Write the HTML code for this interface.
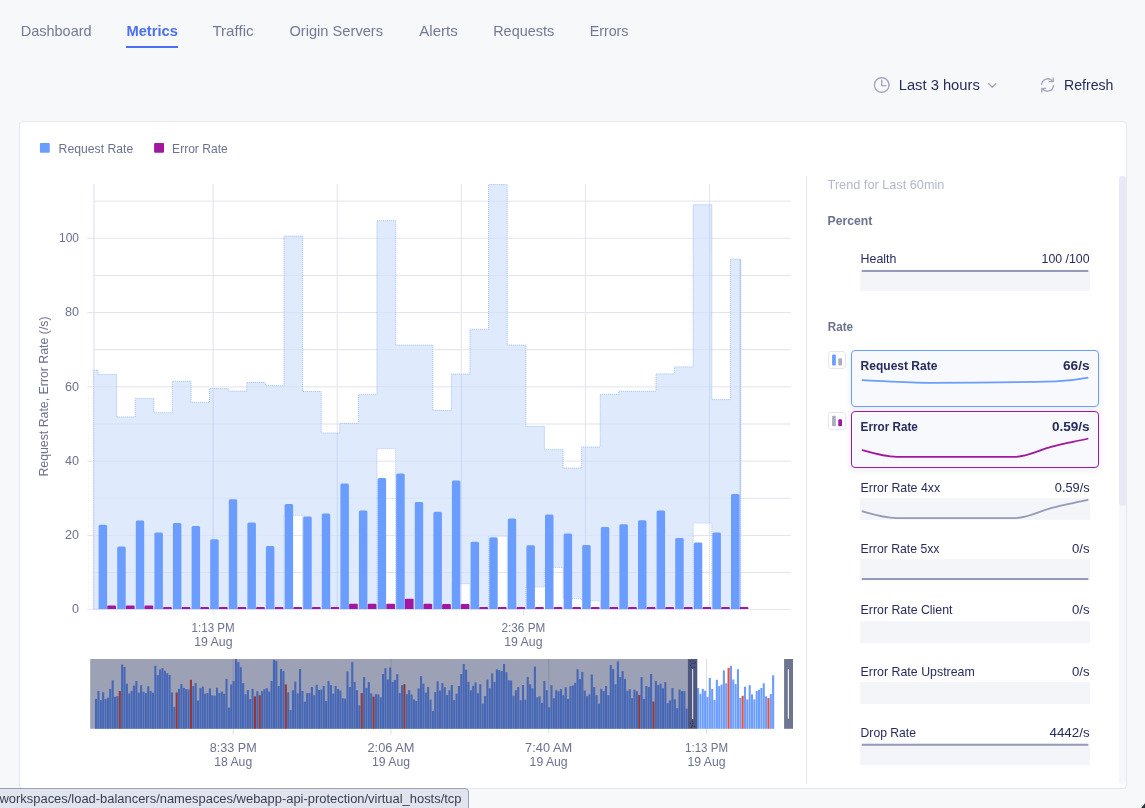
<!DOCTYPE html>
<html lang="en"><head><meta charset="utf-8"><title>Metrics</title>
<style>
html,body{margin:0;padding:0}
body{width:1145px;height:808px;overflow:hidden;background:#f7f8fa;font-family:"Liberation Sans", sans-serif;position:relative}
.card{position:absolute;left:19px;top:121px;width:1106px;height:666px;background:#fff;border:1px solid #e4e6f0;border-radius:4px}
.abs{position:absolute}
.gbox{position:absolute;left:860px;width:230px;height:22px;background:#f4f5f8}
.sel{position:absolute;left:851px;width:246px;height:55px;border-radius:4px;background:#f8f9fc;box-shadow:0 2px 6px rgba(40,50,100,0.10)}
.ibtn{position:absolute;left:828px;width:16px;height:16px;border:1px solid #e6e7f3;border-radius:3px;background:#fff}
.status{position:absolute;left:-1px;top:788px;width:470px;height:21px;background:#e1e4ec;border:1px solid #98a0b6;border-top-right-radius:4px;box-sizing:border-box}
svg text{font-family:"Liberation Sans", sans-serif}
svg{will-change:transform}
</style></head><body>

<div class="card"></div>
<div class="abs" style="left:126px;top:45.7px;width:52px;height:2px;background:#4a6ff3"></div>
<div class="sel" style="top:350px;border:1px solid #6b9dfe"></div>
<div class="sel" style="top:411px;border:1px solid #a3169f"></div>
<div class="ibtn" style="top:351px"></div><div class="ibtn" style="top:412px"></div>
<div class="abs" style="left:806px;top:176px;width:1px;height:608px;background:#e4e6f0"></div>
<div class="abs" style="left:1119px;top:176px;width:7px;height:608px;background:#f6f7fa;border-radius:3px"></div>
<div class="abs" style="left:1119px;top:176px;width:7px;height:330px;background:#e8e9f5;border-radius:3px"></div>
<svg class="abs" style="left:0;top:0" width="1145" height="808" viewBox="0 0 1145 808">
<text x="20.7" y="35.9" font-size="14.2" fill="#737a96" font-weight="normal" textLength="70.9" lengthAdjust="spacingAndGlyphs">Dashboard</text>
<text x="212.4" y="35.9" font-size="14.2" fill="#737a96" font-weight="normal" textLength="41.2" lengthAdjust="spacingAndGlyphs">Traffic</text>
<text x="289.4" y="35.9" font-size="14.2" fill="#737a96" font-weight="normal" textLength="93.7" lengthAdjust="spacingAndGlyphs">Origin Servers</text>
<text x="419.3" y="35.9" font-size="14.2" fill="#737a96" font-weight="normal" textLength="38.4" lengthAdjust="spacingAndGlyphs">Alerts</text>
<text x="493.2" y="35.9" font-size="14.2" fill="#737a96" font-weight="normal" textLength="61.0" lengthAdjust="spacingAndGlyphs">Requests</text>
<text x="589.7" y="35.9" font-size="14.2" fill="#737a96" font-weight="normal" textLength="38.7" lengthAdjust="spacingAndGlyphs">Errors</text>
<text x="126.4" y="35.9" font-size="14.2" fill="#4a6ff3" font-weight="bold" textLength="51.5" lengthAdjust="spacingAndGlyphs">Metrics</text>
<g fill="none" stroke="#a3a8c0" stroke-width="1.4" stroke-linecap="round" stroke-linejoin="round"><circle cx="881.7" cy="85" r="7.3"/><path d="M881.7 80.2V85.6H886"/><path d="M988.8 83.8L992.3 87.2L995.8 83.8"/><path d="M1041.6 84.2A6.2 6.2 0 0 1 1052.6 81.2"/><path d="M1053.2 77.9V81.6H1049.5"/><path d="M1053.4 85.8A6.2 6.2 0 0 1 1042.4 88.8"/><path d="M1041.8 92.1V88.4H1045.5"/></g>
<text x="898.7" y="89.8" font-size="14" fill="#262c5c" font-weight="normal" textLength="81.1" lengthAdjust="spacingAndGlyphs">Last 3 hours</text>
<text x="1064.0" y="89.8" font-size="14" fill="#262c5c" font-weight="normal" textLength="49.4" lengthAdjust="spacingAndGlyphs">Refresh</text>
<rect x="39.9" y="142.9" width="9.9" height="9.9" rx="1" fill="#6b9dfe"/>
<rect x="154.1" y="142.9" width="9.9" height="9.9" rx="1" fill="#a3169f"/>
<text x="58.6" y="152.8" font-size="12.2" fill="#6b7290" font-weight="normal" textLength="74.6" lengthAdjust="spacingAndGlyphs">Request Rate</text>
<text x="172.1" y="152.8" font-size="12.2" fill="#6b7290" font-weight="normal" textLength="55.6" lengthAdjust="spacingAndGlyphs">Error Rate</text>
<line x1="94.0" x2="791" y1="572.56" y2="572.56" stroke="#e1e3ee" stroke-width="1"/>
<line x1="87.3" x2="791" y1="535.42" y2="535.42" stroke="#e1e3ee" stroke-width="1"/>
<line x1="94.0" x2="791" y1="498.28" y2="498.28" stroke="#e1e3ee" stroke-width="1"/>
<line x1="87.3" x2="791" y1="461.14" y2="461.14" stroke="#e1e3ee" stroke-width="1"/>
<line x1="94.0" x2="791" y1="424.00" y2="424.00" stroke="#e1e3ee" stroke-width="1"/>
<line x1="87.3" x2="791" y1="386.86" y2="386.86" stroke="#e1e3ee" stroke-width="1"/>
<line x1="94.0" x2="791" y1="349.72" y2="349.72" stroke="#e1e3ee" stroke-width="1"/>
<line x1="87.3" x2="791" y1="312.58" y2="312.58" stroke="#e1e3ee" stroke-width="1"/>
<line x1="94.0" x2="791" y1="275.44" y2="275.44" stroke="#e1e3ee" stroke-width="1"/>
<line x1="87.3" x2="791" y1="238.30" y2="238.30" stroke="#e1e3ee" stroke-width="1"/>
<line x1="94.0" x2="791" y1="201.16" y2="201.16" stroke="#e1e3ee" stroke-width="1"/>
<line x1="87.3" x2="791" y1="609.5" y2="609.5" stroke="#e4e6f0" stroke-width="1"/>
<line x1="213.15" x2="213.15" y1="184" y2="609.5" stroke="#e1e3ee" stroke-width="1"/>
<line x1="337.24" x2="337.24" y1="184" y2="609.5" stroke="#e1e3ee" stroke-width="1"/>
<line x1="461.33" x2="461.33" y1="184" y2="609.5" stroke="#e1e3ee" stroke-width="1"/>
<line x1="585.42" x2="585.42" y1="184" y2="609.5" stroke="#e1e3ee" stroke-width="1"/>
<line x1="709.51" x2="709.51" y1="184" y2="609.5" stroke="#e1e3ee" stroke-width="1"/>
<line x1="94.0" x2="94.0" y1="184" y2="609.5" stroke="#d9dbed" stroke-width="1"/>
<line x1="213.15" x2="213.15" y1="609.5" y2="615.0" stroke="#e1e3ee" stroke-width="1"/>
<line x1="523.4" x2="523.4" y1="609.5" y2="615.0" stroke="#e1e3ee" stroke-width="1"/>
<text x="72.0" y="613.3" font-size="12.2" fill="#6b7290" font-weight="normal" textLength="7.0" lengthAdjust="spacingAndGlyphs">0</text>
<text x="65.0" y="539.0" font-size="12.2" fill="#6b7290" font-weight="normal" textLength="14.0" lengthAdjust="spacingAndGlyphs">20</text>
<text x="65.0" y="464.7" font-size="12.2" fill="#6b7290" font-weight="normal" textLength="14.0" lengthAdjust="spacingAndGlyphs">40</text>
<text x="65.0" y="390.5" font-size="12.2" fill="#6b7290" font-weight="normal" textLength="14.0" lengthAdjust="spacingAndGlyphs">60</text>
<text x="65.0" y="316.2" font-size="12.2" fill="#6b7290" font-weight="normal" textLength="14.0" lengthAdjust="spacingAndGlyphs">80</text>
<text x="59.0" y="241.9" font-size="12.2" fill="#6b7290" font-weight="normal" textLength="20.0" lengthAdjust="spacingAndGlyphs">100</text>
<text transform="translate(47.9,476.6) rotate(-90)" font-size="12.2" fill="#6b7290" textLength="160.2" lengthAdjust="spacingAndGlyphs">Request Rate, Error Rate (/s)</text>
<text x="191.6" y="632.0" font-size="12.2" fill="#6b7290" font-weight="normal" textLength="43.1" lengthAdjust="spacingAndGlyphs">1:13 PM</text>
<text x="194.2" y="645.6" font-size="12.2" fill="#6b7290" font-weight="normal" textLength="38.3" lengthAdjust="spacingAndGlyphs">19 Aug</text>
<text x="501.6" y="632.0" font-size="12.2" fill="#6b7290" font-weight="normal" textLength="43.6" lengthAdjust="spacingAndGlyphs">2:36 PM</text>
<text x="504.2" y="645.6" font-size="12.2" fill="#6b7290" font-weight="normal" textLength="38.3" lengthAdjust="spacingAndGlyphs">19 Aug</text>
<clipPath id="pc"><rect x="93.2" y="184" width="698.0" height="426.5"/></clipPath>
<clipPath id="ac"><path d="M94.0 370.2 L98.0 370.2 L98.0 374.6 L116.6 374.6 L116.6 417.0 L135.2 417.0 L135.2 398.4 L153.8 398.4 L153.8 412.7 L172.4 412.7 L172.4 381.3 L191.0 381.3 L191.0 402.3 L209.6 402.3 L209.6 388.6 L228.2 388.6 L228.2 391.1 L246.8 391.1 L246.8 382.5 L265.4 382.5 L265.4 385.7 L284.0 385.7 L284.0 236.1 L302.6 236.1 L302.6 391.5 L321.2 391.5 L321.2 433.0 L339.8 433.0 L339.8 423.4 L358.4 423.4 L358.4 394.4 L377.0 394.4 L377.0 220.7 L395.6 220.7 L395.6 345.1 L414.2 345.1 L414.2 345.1 L432.8 345.1 L432.8 410.5 L451.4 410.5 L451.4 374.1 L470.0 374.1 L470.0 329.3 L488.6 329.3 L488.6 184.6 L507.2 184.6 L507.2 345.1 L525.8 345.1 L525.8 426.5 L544.4 426.5 L544.4 449.7 L563.0 449.7 L563.0 468.1 L581.6 468.1 L581.6 447.1 L600.2 447.1 L600.2 394.3 L618.8 394.3 L618.8 391.3 L637.4 391.3 L637.4 391.3 L656.0 391.3 L656.0 373.9 L674.6 373.9 L674.6 366.9 L693.2 366.9 L693.2 204.8 L711.8 204.8 L711.8 399.6 L730.4 399.6 L730.4 259.2 L740.7 259.2 L740.7 609.0 L730.4 609.0 L730.4 609.0 L711.8 609.0 L711.8 523.1 L693.2 523.1 L693.2 609.0 L674.6 609.0 L674.6 609.0 L656.0 609.0 L656.0 609.0 L637.4 609.0 L637.4 609.0 L618.8 609.0 L618.8 609.0 L600.2 609.0 L600.2 600.8 L581.6 600.8 L581.6 598.6 L563.0 598.6 L563.0 567.4 L544.4 567.4 L544.4 587.0 L525.8 587.0 L525.8 609.0 L507.2 609.0 L507.2 536.2 L488.6 536.2 L488.6 609.0 L470.0 609.0 L470.0 583.7 L451.4 583.7 L451.4 609.0 L432.8 609.0 L432.8 609.0 L414.2 609.0 L414.2 609.0 L395.6 609.0 L395.6 448.6 L377.0 448.6 L377.0 609.0 L358.4 609.0 L358.4 609.0 L339.8 609.0 L339.8 606.3 L321.2 606.3 L321.2 609.0 L302.6 609.0 L302.6 515.3 L284.0 515.3 L284.0 609.0 L265.4 609.0 L265.4 609.0 L246.8 609.0 L246.8 609.0 L228.2 609.0 L228.2 609.0 L209.6 609.0 L209.6 609.0 L191.0 609.0 L191.0 609.0 L172.4 609.0 L172.4 609.0 L153.8 609.0 L153.8 609.0 L135.2 609.0 L135.2 609.0 L116.6 609.0 L116.6 609.0 L98.0 609.0 L98.0 609.0 L94.0 609.0 Z"/></clipPath>
<g clip-path="url(#pc)">
<path d="M94.0 370.2 L98.0 370.2 L98.0 374.6 L116.6 374.6 L116.6 417.0 L135.2 417.0 L135.2 398.4 L153.8 398.4 L153.8 412.7 L172.4 412.7 L172.4 381.3 L191.0 381.3 L191.0 402.3 L209.6 402.3 L209.6 388.6 L228.2 388.6 L228.2 391.1 L246.8 391.1 L246.8 382.5 L265.4 382.5 L265.4 385.7 L284.0 385.7 L284.0 236.1 L302.6 236.1 L302.6 391.5 L321.2 391.5 L321.2 433.0 L339.8 433.0 L339.8 423.4 L358.4 423.4 L358.4 394.4 L377.0 394.4 L377.0 220.7 L395.6 220.7 L395.6 345.1 L414.2 345.1 L414.2 345.1 L432.8 345.1 L432.8 410.5 L451.4 410.5 L451.4 374.1 L470.0 374.1 L470.0 329.3 L488.6 329.3 L488.6 184.6 L507.2 184.6 L507.2 345.1 L525.8 345.1 L525.8 426.5 L544.4 426.5 L544.4 449.7 L563.0 449.7 L563.0 468.1 L581.6 468.1 L581.6 447.1 L600.2 447.1 L600.2 394.3 L618.8 394.3 L618.8 391.3 L637.4 391.3 L637.4 391.3 L656.0 391.3 L656.0 373.9 L674.6 373.9 L674.6 366.9 L693.2 366.9 L693.2 204.8 L711.8 204.8 L711.8 399.6 L730.4 399.6 L730.4 259.2 L740.7 259.2 L740.7 609.0 L730.4 609.0 L730.4 609.0 L711.8 609.0 L711.8 523.1 L693.2 523.1 L693.2 609.0 L674.6 609.0 L674.6 609.0 L656.0 609.0 L656.0 609.0 L637.4 609.0 L637.4 609.0 L618.8 609.0 L618.8 609.0 L600.2 609.0 L600.2 600.8 L581.6 600.8 L581.6 598.6 L563.0 598.6 L563.0 567.4 L544.4 567.4 L544.4 587.0 L525.8 587.0 L525.8 609.0 L507.2 609.0 L507.2 536.2 L488.6 536.2 L488.6 609.0 L470.0 609.0 L470.0 583.7 L451.4 583.7 L451.4 609.0 L432.8 609.0 L432.8 609.0 L414.2 609.0 L414.2 609.0 L395.6 609.0 L395.6 448.6 L377.0 448.6 L377.0 609.0 L358.4 609.0 L358.4 609.0 L339.8 609.0 L339.8 606.3 L321.2 606.3 L321.2 609.0 L302.6 609.0 L302.6 515.3 L284.0 515.3 L284.0 609.0 L265.4 609.0 L265.4 609.0 L246.8 609.0 L246.8 609.0 L228.2 609.0 L228.2 609.0 L209.6 609.0 L209.6 609.0 L191.0 609.0 L191.0 609.0 L172.4 609.0 L172.4 609.0 L153.8 609.0 L153.8 609.0 L135.2 609.0 L135.2 609.0 L116.6 609.0 L116.6 609.0 L98.0 609.0 L98.0 609.0 L94.0 609.0 Z" fill="rgba(211,225,252,0.7)" stroke="none"/>
<g clip-path="url(#ac)">
<line x1="213.15" x2="213.15" y1="184" y2="609.5" stroke="#cbd9f7" stroke-width="1"/>
<line x1="337.24" x2="337.24" y1="184" y2="609.5" stroke="#cbd9f7" stroke-width="1"/>
<line x1="461.33" x2="461.33" y1="184" y2="609.5" stroke="#cbd9f7" stroke-width="1"/>
<line x1="585.42" x2="585.42" y1="184" y2="609.5" stroke="#cbd9f7" stroke-width="1"/>
<line x1="709.51" x2="709.51" y1="184" y2="609.5" stroke="#cbd9f7" stroke-width="1"/>
</g>
<line x1="740.2" x2="740.2" y1="259.2" y2="609" stroke="#bdd1fa" stroke-width="1.4"/>
<path d="M94.0 370.2 L98.0 370.2 L98.0 374.6 L116.6 374.6 L116.6 417.0 L135.2 417.0 L135.2 398.4 L153.8 398.4 L153.8 412.7 L172.4 412.7 L172.4 381.3 L191.0 381.3 L191.0 402.3 L209.6 402.3 L209.6 388.6 L228.2 388.6 L228.2 391.1 L246.8 391.1 L246.8 382.5 L265.4 382.5 L265.4 385.7 L284.0 385.7 L284.0 236.1 L302.6 236.1 L302.6 391.5 L321.2 391.5 L321.2 433.0 L339.8 433.0 L339.8 423.4 L358.4 423.4 L358.4 394.4 L377.0 394.4 L377.0 220.7 L395.6 220.7 L395.6 345.1 L414.2 345.1 L414.2 345.1 L432.8 345.1 L432.8 410.5 L451.4 410.5 L451.4 374.1 L470.0 374.1 L470.0 329.3 L488.6 329.3 L488.6 184.6 L507.2 184.6 L507.2 345.1 L525.8 345.1 L525.8 426.5 L544.4 426.5 L544.4 449.7 L563.0 449.7 L563.0 468.1 L581.6 468.1 L581.6 447.1 L600.2 447.1 L600.2 394.3 L618.8 394.3 L618.8 391.3 L637.4 391.3 L637.4 391.3 L656.0 391.3 L656.0 373.9 L674.6 373.9 L674.6 366.9 L693.2 366.9 L693.2 204.8 L711.8 204.8 L711.8 399.6 L730.4 399.6 L730.4 259.2 L740.7 259.2 L740.7 609" fill="none" stroke="#9dbcf8" stroke-width="1" stroke-dasharray="1 1"/>
<path d="M740.7 609.0 L730.4 609.0 L730.4 609.0 L711.8 609.0 L711.8 523.1 L693.2 523.1 L693.2 609.0 L674.6 609.0 L674.6 609.0 L656.0 609.0 L656.0 609.0 L637.4 609.0 L637.4 609.0 L618.8 609.0 L618.8 609.0 L600.2 609.0 L600.2 600.8 L581.6 600.8 L581.6 598.6 L563.0 598.6 L563.0 567.4 L544.4 567.4 L544.4 587.0 L525.8 587.0 L525.8 609.0 L507.2 609.0 L507.2 536.2 L488.6 536.2 L488.6 609.0 L470.0 609.0 L470.0 583.7 L451.4 583.7 L451.4 609.0 L432.8 609.0 L432.8 609.0 L414.2 609.0 L414.2 609.0 L395.6 609.0 L395.6 448.6 L377.0 448.6 L377.0 609.0 L358.4 609.0 L358.4 609.0 L339.8 609.0 L339.8 606.3 L321.2 606.3 L321.2 609.0 L302.6 609.0 L302.6 515.3 L284.0 515.3 L284.0 609.0 L265.4 609.0 L265.4 609.0 L246.8 609.0 L246.8 609.0 L228.2 609.0 L228.2 609.0 L209.6 609.0 L209.6 609.0 L191.0 609.0 L191.0 609.0 L172.4 609.0 L172.4 609.0 L153.8 609.0 L153.8 609.0 L135.2 609.0 L135.2 609.0 L116.6 609.0 L116.6 609.0 L98.0 609.0 L98.0 609.0 L94.0 609.0" fill="none" stroke="#9dbcf8" stroke-width="1" stroke-dasharray="1 1" stroke-opacity="0.8"/>
<line x1="93.5" x2="93.5" y1="370.2" y2="609" stroke="#9dbcf8" stroke-width="1" stroke-dasharray="1 1"/>
<path d="M98.6 609.0 V526.3 Q98.6 524.8 100.1 524.8 H105.6 Q107.1 524.8 107.1 526.3 V609.0 Z" fill="#6b9dfe"/>
<path d="M107.3 609.0 V606.6 Q107.3 605.6 108.3 605.6 H115.0 Q116.0 605.6 116.0 606.6 V609.0 Z" fill="#a3169f"/>
<path d="M117.2 609.0 V548.0 Q117.2 546.5 118.7 546.5 H124.2 Q125.7 546.5 125.7 548.0 V609.0 Z" fill="#6b9dfe"/>
<path d="M125.9 609.0 V606.6 Q125.9 605.6 126.9 605.6 H133.6 Q134.6 605.6 134.6 606.6 V609.0 Z" fill="#a3169f"/>
<path d="M135.8 609.0 V521.9 Q135.8 520.4 137.2 520.4 H142.8 Q144.2 520.4 144.2 521.9 V609.0 Z" fill="#6b9dfe"/>
<path d="M144.5 609.0 V606.6 Q144.5 605.6 145.5 605.6 H152.2 Q153.2 605.6 153.2 606.6 V609.0 Z" fill="#a3169f"/>
<path d="M154.4 609.0 V534.0 Q154.4 532.5 155.9 532.5 H161.4 Q162.9 532.5 162.9 534.0 V609.0 Z" fill="#6b9dfe"/>
<path d="M163.1 609.0 V608.0 Q163.1 607.0 164.1 607.0 H170.8 Q171.8 607.0 171.8 608.0 V609.0 Z" fill="#a3169f"/>
<path d="M172.9 609.0 V524.5 Q172.9 523.0 174.4 523.0 H179.9 Q181.4 523.0 181.4 524.5 V609.0 Z" fill="#6b9dfe"/>
<path d="M181.7 609.0 V608.0 Q181.7 607.0 182.7 607.0 H189.4 Q190.4 607.0 190.4 608.0 V609.0 Z" fill="#a3169f"/>
<path d="M191.6 609.0 V527.4 Q191.6 525.9 193.1 525.9 H198.6 Q200.1 525.9 200.1 527.4 V609.0 Z" fill="#6b9dfe"/>
<path d="M200.3 609.0 V608.0 Q200.3 607.0 201.3 607.0 H208.0 Q209.0 607.0 209.0 608.0 V609.0 Z" fill="#a3169f"/>
<path d="M210.2 609.0 V540.7 Q210.2 539.2 211.7 539.2 H217.2 Q218.7 539.2 218.7 540.7 V609.0 Z" fill="#6b9dfe"/>
<path d="M218.9 609.0 V608.0 Q218.9 607.0 219.9 607.0 H226.6 Q227.6 607.0 227.6 608.0 V609.0 Z" fill="#a3169f"/>
<path d="M228.8 609.0 V500.7 Q228.8 499.2 230.2 499.2 H235.8 Q237.2 499.2 237.2 500.7 V609.0 Z" fill="#6b9dfe"/>
<path d="M237.5 609.0 V608.0 Q237.5 607.0 238.5 607.0 H245.2 Q246.2 607.0 246.2 608.0 V609.0 Z" fill="#a3169f"/>
<path d="M247.4 609.0 V524.1 Q247.4 522.6 248.9 522.6 H254.4 Q255.9 522.6 255.9 524.1 V609.0 Z" fill="#6b9dfe"/>
<path d="M256.1 609.0 V608.0 Q256.1 607.0 257.1 607.0 H263.8 Q264.8 607.0 264.8 608.0 V609.0 Z" fill="#a3169f"/>
<path d="M265.9 609.0 V547.6 Q265.9 546.1 267.4 546.1 H272.9 Q274.4 546.1 274.4 547.6 V609.0 Z" fill="#6b9dfe"/>
<path d="M274.7 609.0 V608.0 Q274.7 607.0 275.7 607.0 H282.4 Q283.4 607.0 283.4 608.0 V609.0 Z" fill="#a3169f"/>
<path d="M284.6 609.0 V505.6 Q284.6 504.1 286.1 504.1 H291.6 Q293.1 504.1 293.1 505.6 V609.0 Z" fill="#6b9dfe"/>
<path d="M293.3 609.0 V608.0 Q293.3 607.0 294.3 607.0 H301.0 Q302.0 607.0 302.0 608.0 V609.0 Z" fill="#a3169f"/>
<path d="M303.2 609.0 V517.9 Q303.2 516.4 304.7 516.4 H310.2 Q311.7 516.4 311.7 517.9 V609.0 Z" fill="#6b9dfe"/>
<path d="M311.9 609.0 V608.0 Q311.9 607.0 312.9 607.0 H319.6 Q320.6 607.0 320.6 608.0 V609.0 Z" fill="#a3169f"/>
<path d="M321.8 609.0 V515.0 Q321.8 513.5 323.2 513.5 H328.8 Q330.2 513.5 330.2 515.0 V609.0 Z" fill="#6b9dfe"/>
<path d="M330.5 609.0 V608.0 Q330.5 607.0 331.5 607.0 H338.2 Q339.2 607.0 339.2 608.0 V609.0 Z" fill="#a3169f"/>
<path d="M340.4 609.0 V484.9 Q340.4 483.4 341.9 483.4 H347.4 Q348.9 483.4 348.9 484.9 V609.0 Z" fill="#6b9dfe"/>
<path d="M349.1 609.0 V604.7 Q349.1 603.7 350.1 603.7 H356.8 Q357.8 603.7 357.8 604.7 V609.0 Z" fill="#a3169f"/>
<path d="M358.9 609.0 V511.9 Q358.9 510.4 360.4 510.4 H365.9 Q367.4 510.4 367.4 511.9 V609.0 Z" fill="#6b9dfe"/>
<path d="M367.7 609.0 V604.7 Q367.7 603.7 368.7 603.7 H375.4 Q376.4 603.7 376.4 604.7 V609.0 Z" fill="#a3169f"/>
<path d="M377.6 609.0 V479.6 Q377.6 478.1 379.1 478.1 H384.6 Q386.1 478.1 386.1 479.6 V609.0 Z" fill="#6b9dfe"/>
<path d="M386.3 609.0 V604.7 Q386.3 603.7 387.3 603.7 H394.0 Q395.0 603.7 395.0 604.7 V609.0 Z" fill="#a3169f"/>
<path d="M396.2 609.0 V474.9 Q396.2 473.4 397.7 473.4 H403.2 Q404.7 473.4 404.7 474.9 V609.0 Z" fill="#6b9dfe"/>
<path d="M404.9 609.0 V599.8 Q404.9 598.8 405.9 598.8 H412.6 Q413.6 598.8 413.6 599.8 V609.0 Z" fill="#a3169f"/>
<path d="M414.8 609.0 V503.6 Q414.8 502.1 416.2 502.1 H421.8 Q423.2 502.1 423.2 503.6 V609.0 Z" fill="#6b9dfe"/>
<path d="M423.5 609.0 V604.7 Q423.5 603.7 424.5 603.7 H431.2 Q432.2 603.7 432.2 604.7 V609.0 Z" fill="#a3169f"/>
<path d="M433.4 609.0 V513.2 Q433.4 511.7 434.9 511.7 H440.4 Q441.9 511.7 441.9 513.2 V609.0 Z" fill="#6b9dfe"/>
<path d="M442.1 609.0 V605.1 Q442.1 604.1 443.1 604.1 H449.8 Q450.8 604.1 450.8 605.1 V609.0 Z" fill="#a3169f"/>
<path d="M451.9 609.0 V482.0 Q451.9 480.5 453.4 480.5 H458.9 Q460.4 480.5 460.4 482.0 V609.0 Z" fill="#6b9dfe"/>
<path d="M460.7 609.0 V605.1 Q460.7 604.1 461.7 604.1 H468.4 Q469.4 604.1 469.4 605.1 V609.0 Z" fill="#a3169f"/>
<path d="M470.6 609.0 V543.3 Q470.6 541.8 472.1 541.8 H477.6 Q479.1 541.8 479.1 543.3 V609.0 Z" fill="#6b9dfe"/>
<path d="M479.3 609.0 V608.0 Q479.3 607.0 480.3 607.0 H487.0 Q488.0 607.0 488.0 608.0 V609.0 Z" fill="#a3169f"/>
<path d="M489.2 609.0 V538.8 Q489.2 537.3 490.7 537.3 H496.2 Q497.7 537.3 497.7 538.8 V609.0 Z" fill="#6b9dfe"/>
<path d="M497.9 609.0 V608.0 Q497.9 607.0 498.9 607.0 H505.6 Q506.6 607.0 506.6 608.0 V609.0 Z" fill="#a3169f"/>
<path d="M507.8 609.0 V519.9 Q507.8 518.4 509.2 518.4 H514.8 Q516.2 518.4 516.2 519.9 V609.0 Z" fill="#6b9dfe"/>
<path d="M516.5 609.0 V608.0 Q516.5 607.0 517.5 607.0 H524.2 Q525.2 607.0 525.2 608.0 V609.0 Z" fill="#a3169f"/>
<path d="M526.4 609.0 V546.8 Q526.4 545.3 527.9 545.3 H533.4 Q534.9 545.3 534.9 546.8 V609.0 Z" fill="#6b9dfe"/>
<path d="M535.1 609.0 V608.0 Q535.1 607.0 536.1 607.0 H542.8 Q543.8 607.0 543.8 608.0 V609.0 Z" fill="#a3169f"/>
<path d="M545.0 609.0 V516.1 Q545.0 514.6 546.5 514.6 H552.0 Q553.5 514.6 553.5 516.1 V609.0 Z" fill="#6b9dfe"/>
<path d="M553.7 609.0 V608.0 Q553.7 607.0 554.7 607.0 H561.4 Q562.4 607.0 562.4 608.0 V609.0 Z" fill="#a3169f"/>
<path d="M563.6 609.0 V535.0 Q563.6 533.5 565.1 533.5 H570.6 Q572.1 533.5 572.1 535.0 V609.0 Z" fill="#6b9dfe"/>
<path d="M572.3 609.0 V608.0 Q572.3 607.0 573.3 607.0 H580.0 Q581.0 607.0 581.0 608.0 V609.0 Z" fill="#a3169f"/>
<path d="M582.2 609.0 V546.4 Q582.2 544.9 583.7 544.9 H589.2 Q590.7 544.9 590.7 546.4 V609.0 Z" fill="#6b9dfe"/>
<path d="M590.9 609.0 V608.0 Q590.9 607.0 591.9 607.0 H598.6 Q599.6 607.0 599.6 608.0 V609.0 Z" fill="#a3169f"/>
<path d="M600.8 609.0 V528.4 Q600.8 526.9 602.3 526.9 H607.8 Q609.3 526.9 609.3 528.4 V609.0 Z" fill="#6b9dfe"/>
<path d="M609.5 609.0 V608.0 Q609.5 607.0 610.5 607.0 H617.2 Q618.2 607.0 618.2 608.0 V609.0 Z" fill="#a3169f"/>
<path d="M619.4 609.0 V525.7 Q619.4 524.2 620.9 524.2 H626.4 Q627.9 524.2 627.9 525.7 V609.0 Z" fill="#6b9dfe"/>
<path d="M628.1 609.0 V608.0 Q628.1 607.0 629.1 607.0 H635.8 Q636.8 607.0 636.8 608.0 V609.0 Z" fill="#a3169f"/>
<path d="M638.0 609.0 V521.7 Q638.0 520.2 639.5 520.2 H645.0 Q646.5 520.2 646.5 521.7 V609.0 Z" fill="#6b9dfe"/>
<path d="M646.7 609.0 V608.0 Q646.7 607.0 647.7 607.0 H654.4 Q655.4 607.0 655.4 608.0 V609.0 Z" fill="#a3169f"/>
<path d="M656.6 609.0 V511.9 Q656.6 510.4 658.1 510.4 H663.6 Q665.1 510.4 665.1 511.9 V609.0 Z" fill="#6b9dfe"/>
<path d="M665.3 609.0 V608.0 Q665.3 607.0 666.3 607.0 H673.0 Q674.0 607.0 674.0 608.0 V609.0 Z" fill="#a3169f"/>
<path d="M675.2 609.0 V539.5 Q675.2 538.0 676.7 538.0 H682.2 Q683.7 538.0 683.7 539.5 V609.0 Z" fill="#6b9dfe"/>
<path d="M683.9 609.0 V608.0 Q683.9 607.0 684.9 607.0 H691.6 Q692.6 607.0 692.6 608.0 V609.0 Z" fill="#a3169f"/>
<path d="M693.8 609.0 V543.9 Q693.8 542.4 695.3 542.4 H700.8 Q702.3 542.4 702.3 543.9 V609.0 Z" fill="#6b9dfe"/>
<path d="M702.5 609.0 V608.0 Q702.5 607.0 703.5 607.0 H710.2 Q711.2 607.0 711.2 608.0 V609.0 Z" fill="#a3169f"/>
<path d="M712.4 609.0 V533.9 Q712.4 532.4 713.9 532.4 H719.4 Q720.9 532.4 720.9 533.9 V609.0 Z" fill="#6b9dfe"/>
<path d="M721.1 609.0 V608.0 Q721.1 607.0 722.1 607.0 H728.8 Q729.8 607.0 729.8 608.0 V609.0 Z" fill="#a3169f"/>
<path d="M731.0 609.0 V495.4 Q731.0 493.9 732.5 493.9 H738.0 Q739.5 493.9 739.5 495.4 V609.0 Z" fill="#6b9dfe"/>
<path d="M739.7 609.0 V608.0 Q739.7 607.0 740.7 607.0 H747.4 Q748.4 607.0 748.4 608.0 V609.0 Z" fill="#a3169f"/>
</g>
<line x1="233.2" x2="233.2" y1="659" y2="734.3" stroke="#dddfec" stroke-width="1"/>
<line x1="391" x2="391" y1="659" y2="734.3" stroke="#dddfec" stroke-width="1"/>
<line x1="548.7" x2="548.7" y1="659" y2="734.3" stroke="#dddfec" stroke-width="1"/>
<line x1="706.5" x2="706.5" y1="659" y2="734.3" stroke="#dddfec" stroke-width="1"/>
<rect x="95.00" y="698.9" width="2.1" height="29.9" fill="#6b9dfe"/>
<rect x="97.37" y="691.0" width="2.1" height="37.8" fill="#6b9dfe"/>
<rect x="99.74" y="700.1" width="2.1" height="28.7" fill="#6b9dfe"/>
<rect x="102.12" y="692.3" width="2.1" height="36.5" fill="#6b9dfe"/>
<rect x="104.49" y="699.1" width="2.1" height="29.7" fill="#6b9dfe"/>
<rect x="106.86" y="697.6" width="2.1" height="31.2" fill="#6b9dfe"/>
<rect x="109.23" y="688.9" width="2.1" height="39.9" fill="#6b9dfe"/>
<rect x="111.60" y="680.3" width="2.1" height="48.5" fill="#6b9dfe"/>
<rect x="113.98" y="696.8" width="2.1" height="32.0" fill="#6b9dfe"/>
<rect x="116.35" y="696.1" width="2.1" height="32.7" fill="#6b9dfe"/>
<rect x="118.72" y="691.0" width="2.1" height="37.8" fill="#eb4d2f"/>
<rect x="121.09" y="664.5" width="2.1" height="64.3" fill="#6b9dfe"/>
<rect x="123.46" y="666.9" width="2.1" height="61.9" fill="#6b9dfe"/>
<rect x="125.84" y="683.7" width="2.1" height="45.1" fill="#6b9dfe"/>
<rect x="128.21" y="693.4" width="2.1" height="35.4" fill="#6b9dfe"/>
<rect x="130.58" y="690.8" width="2.1" height="38.0" fill="#6b9dfe"/>
<rect x="132.95" y="685.5" width="2.1" height="43.3" fill="#6b9dfe"/>
<rect x="135.32" y="681.0" width="2.1" height="47.8" fill="#6b9dfe"/>
<rect x="137.70" y="692.6" width="2.1" height="36.2" fill="#6b9dfe"/>
<rect x="140.07" y="685.2" width="2.1" height="43.6" fill="#6b9dfe"/>
<rect x="142.44" y="691.7" width="2.1" height="37.1" fill="#6b9dfe"/>
<rect x="144.81" y="693.1" width="2.1" height="35.7" fill="#6b9dfe"/>
<rect x="147.18" y="686.3" width="2.1" height="42.5" fill="#6b9dfe"/>
<rect x="149.56" y="691.0" width="2.1" height="37.8" fill="#6b9dfe"/>
<rect x="151.93" y="692.8" width="2.1" height="36.0" fill="#6b9dfe"/>
<rect x="154.30" y="665.8" width="2.1" height="63.0" fill="#6b9dfe"/>
<rect x="156.67" y="675.1" width="2.1" height="53.7" fill="#6b9dfe"/>
<rect x="159.04" y="669.5" width="2.1" height="59.3" fill="#6b9dfe"/>
<rect x="161.42" y="668.1" width="2.1" height="60.7" fill="#6b9dfe"/>
<rect x="163.79" y="670.8" width="2.1" height="58.0" fill="#6b9dfe"/>
<rect x="166.16" y="673.2" width="2.1" height="55.6" fill="#6b9dfe"/>
<rect x="168.53" y="675.0" width="2.1" height="53.8" fill="#6b9dfe"/>
<rect x="170.90" y="692.4" width="2.1" height="36.4" fill="#6b9dfe"/>
<rect x="173.28" y="706.8" width="2.1" height="22.0" fill="#6b9dfe"/>
<rect x="175.65" y="692.4" width="2.1" height="36.4" fill="#eb4d2f"/>
<rect x="178.02" y="688.9" width="2.1" height="39.9" fill="#6b9dfe"/>
<rect x="180.39" y="684.0" width="2.1" height="44.8" fill="#6b9dfe"/>
<rect x="182.76" y="687.9" width="2.1" height="40.9" fill="#6b9dfe"/>
<rect x="185.14" y="689.1" width="2.1" height="39.7" fill="#6b9dfe"/>
<rect x="187.51" y="689.4" width="2.1" height="39.4" fill="#6b9dfe"/>
<rect x="189.88" y="679.8" width="2.1" height="49.0" fill="#eb4d2f"/>
<rect x="192.25" y="686.0" width="2.1" height="42.8" fill="#6b9dfe"/>
<rect x="194.62" y="683.1" width="2.1" height="45.7" fill="#6b9dfe"/>
<rect x="197.00" y="700.5" width="2.1" height="28.3" fill="#6b9dfe"/>
<rect x="199.37" y="688.1" width="2.1" height="40.7" fill="#6b9dfe"/>
<rect x="201.74" y="686.6" width="2.1" height="42.2" fill="#6b9dfe"/>
<rect x="204.11" y="693.6" width="2.1" height="35.2" fill="#6b9dfe"/>
<rect x="206.48" y="693.1" width="2.1" height="35.7" fill="#6b9dfe"/>
<rect x="208.86" y="688.4" width="2.1" height="40.4" fill="#6b9dfe"/>
<rect x="211.23" y="695.2" width="2.1" height="33.6" fill="#6b9dfe"/>
<rect x="213.60" y="695.7" width="2.1" height="33.1" fill="#6b9dfe"/>
<rect x="215.97" y="687.7" width="2.1" height="41.1" fill="#6b9dfe"/>
<rect x="218.34" y="693.1" width="2.1" height="35.7" fill="#6b9dfe"/>
<rect x="220.72" y="691.5" width="2.1" height="37.3" fill="#6b9dfe"/>
<rect x="223.09" y="693.8" width="2.1" height="35.0" fill="#6b9dfe"/>
<rect x="225.46" y="678.9" width="2.1" height="49.9" fill="#6b9dfe"/>
<rect x="227.83" y="707.6" width="2.1" height="21.2" fill="#6b9dfe"/>
<rect x="230.20" y="684.5" width="2.1" height="44.3" fill="#6b9dfe"/>
<rect x="232.58" y="681.0" width="2.1" height="47.8" fill="#6b9dfe"/>
<rect x="234.95" y="659.2" width="2.1" height="69.6" fill="#6b9dfe"/>
<rect x="237.32" y="662.1" width="2.1" height="66.7" fill="#6b9dfe"/>
<rect x="239.69" y="667.2" width="2.1" height="61.6" fill="#6b9dfe"/>
<rect x="242.06" y="683.1" width="2.1" height="45.7" fill="#6b9dfe"/>
<rect x="244.44" y="694.2" width="2.1" height="34.6" fill="#6b9dfe"/>
<rect x="246.81" y="690.0" width="2.1" height="38.8" fill="#6b9dfe"/>
<rect x="249.18" y="699.1" width="2.1" height="29.7" fill="#6b9dfe"/>
<rect x="251.55" y="688.9" width="2.1" height="39.9" fill="#6b9dfe"/>
<rect x="253.92" y="696.3" width="2.1" height="32.5" fill="#eb4d2f"/>
<rect x="256.30" y="691.3" width="2.1" height="37.5" fill="#6b9dfe"/>
<rect x="258.67" y="695.2" width="2.1" height="33.6" fill="#eb4d2f"/>
<rect x="261.04" y="691.2" width="2.1" height="37.6" fill="#6b9dfe"/>
<rect x="263.41" y="689.2" width="2.1" height="39.6" fill="#6b9dfe"/>
<rect x="265.78" y="688.1" width="2.1" height="40.7" fill="#6b9dfe"/>
<rect x="268.16" y="691.5" width="2.1" height="37.3" fill="#6b9dfe"/>
<rect x="270.53" y="681.0" width="2.1" height="47.8" fill="#6b9dfe"/>
<rect x="272.90" y="659.8" width="2.1" height="69.0" fill="#6b9dfe"/>
<rect x="275.27" y="660.8" width="2.1" height="68.0" fill="#6b9dfe"/>
<rect x="277.64" y="686.0" width="2.1" height="42.8" fill="#6b9dfe"/>
<rect x="280.02" y="669.0" width="2.1" height="59.8" fill="#6b9dfe"/>
<rect x="282.39" y="671.1" width="2.1" height="57.7" fill="#6b9dfe"/>
<rect x="284.76" y="684.4" width="2.1" height="44.4" fill="#eb4d2f"/>
<rect x="287.13" y="692.3" width="2.1" height="36.5" fill="#6b9dfe"/>
<rect x="289.50" y="710.1" width="2.1" height="18.7" fill="#6b9dfe"/>
<rect x="291.88" y="690.2" width="2.1" height="38.6" fill="#6b9dfe"/>
<rect x="294.25" y="681.6" width="2.1" height="47.2" fill="#6b9dfe"/>
<rect x="296.62" y="693.4" width="2.1" height="35.4" fill="#6b9dfe"/>
<rect x="298.99" y="669.0" width="2.1" height="59.8" fill="#6b9dfe"/>
<rect x="301.36" y="691.0" width="2.1" height="37.8" fill="#6b9dfe"/>
<rect x="303.74" y="701.7" width="2.1" height="27.1" fill="#6b9dfe"/>
<rect x="306.11" y="693.1" width="2.1" height="35.7" fill="#6b9dfe"/>
<rect x="308.48" y="693.1" width="2.1" height="35.7" fill="#6b9dfe"/>
<rect x="310.85" y="687.0" width="2.1" height="41.8" fill="#6b9dfe"/>
<rect x="313.22" y="695.2" width="2.1" height="33.6" fill="#6b9dfe"/>
<rect x="315.60" y="684.7" width="2.1" height="44.1" fill="#6b9dfe"/>
<rect x="317.97" y="690.0" width="2.1" height="38.8" fill="#6b9dfe"/>
<rect x="320.34" y="689.6" width="2.1" height="39.2" fill="#6b9dfe"/>
<rect x="322.71" y="686.0" width="2.1" height="42.8" fill="#6b9dfe"/>
<rect x="325.08" y="701.0" width="2.1" height="27.8" fill="#6b9dfe"/>
<rect x="327.46" y="681.0" width="2.1" height="47.8" fill="#6b9dfe"/>
<rect x="329.83" y="685.0" width="2.1" height="43.8" fill="#6b9dfe"/>
<rect x="332.20" y="693.6" width="2.1" height="35.2" fill="#6b9dfe"/>
<rect x="334.57" y="686.0" width="2.1" height="42.8" fill="#6b9dfe"/>
<rect x="336.94" y="689.1" width="2.1" height="39.7" fill="#6b9dfe"/>
<rect x="339.32" y="690.5" width="2.1" height="38.3" fill="#6b9dfe"/>
<rect x="341.69" y="698.2" width="2.1" height="30.6" fill="#6b9dfe"/>
<rect x="344.06" y="698.7" width="2.1" height="30.1" fill="#6b9dfe"/>
<rect x="346.43" y="671.4" width="2.1" height="57.4" fill="#6b9dfe"/>
<rect x="348.80" y="687.0" width="2.1" height="41.8" fill="#6b9dfe"/>
<rect x="351.18" y="662.1" width="2.1" height="66.7" fill="#6b9dfe"/>
<rect x="353.55" y="681.9" width="2.1" height="46.9" fill="#6b9dfe"/>
<rect x="355.92" y="690.2" width="2.1" height="38.6" fill="#6b9dfe"/>
<rect x="358.29" y="705.4" width="2.1" height="23.4" fill="#6b9dfe"/>
<rect x="360.66" y="693.1" width="2.1" height="35.7" fill="#eb4d2f"/>
<rect x="363.04" y="677.1" width="2.1" height="51.7" fill="#6b9dfe"/>
<rect x="365.41" y="687.9" width="2.1" height="40.9" fill="#6b9dfe"/>
<rect x="367.78" y="682.1" width="2.1" height="46.7" fill="#6b9dfe"/>
<rect x="370.15" y="693.4" width="2.1" height="35.4" fill="#6b9dfe"/>
<rect x="372.52" y="696.6" width="2.1" height="32.2" fill="#eb4d2f"/>
<rect x="374.90" y="694.2" width="2.1" height="34.6" fill="#6b9dfe"/>
<rect x="377.27" y="694.5" width="2.1" height="34.3" fill="#6b9dfe"/>
<rect x="379.64" y="697.3" width="2.1" height="31.5" fill="#6b9dfe"/>
<rect x="382.01" y="674.0" width="2.1" height="54.8" fill="#6b9dfe"/>
<rect x="384.38" y="668.2" width="2.1" height="60.6" fill="#6b9dfe"/>
<rect x="386.76" y="679.5" width="2.1" height="49.3" fill="#6b9dfe"/>
<rect x="389.13" y="667.6" width="2.1" height="61.2" fill="#6b9dfe"/>
<rect x="391.50" y="681.9" width="2.1" height="46.9" fill="#6b9dfe"/>
<rect x="393.87" y="680.0" width="2.1" height="48.8" fill="#6b9dfe"/>
<rect x="396.24" y="674.2" width="2.1" height="54.6" fill="#6b9dfe"/>
<rect x="398.62" y="693.1" width="2.1" height="35.7" fill="#6b9dfe"/>
<rect x="400.99" y="685.2" width="2.1" height="43.6" fill="#6b9dfe"/>
<rect x="403.36" y="684.2" width="2.1" height="44.6" fill="#eb4d2f"/>
<rect x="405.73" y="694.2" width="2.1" height="34.6" fill="#6b9dfe"/>
<rect x="408.10" y="690.2" width="2.1" height="38.6" fill="#6b9dfe"/>
<rect x="410.48" y="694.5" width="2.1" height="34.3" fill="#6b9dfe"/>
<rect x="412.85" y="699.4" width="2.1" height="29.4" fill="#6b9dfe"/>
<rect x="415.22" y="701.0" width="2.1" height="27.8" fill="#6b9dfe"/>
<rect x="417.59" y="688.4" width="2.1" height="40.4" fill="#6b9dfe"/>
<rect x="419.96" y="676.1" width="2.1" height="52.7" fill="#6b9dfe"/>
<rect x="422.34" y="683.7" width="2.1" height="45.1" fill="#6b9dfe"/>
<rect x="424.71" y="692.6" width="2.1" height="36.2" fill="#6b9dfe"/>
<rect x="427.08" y="687.0" width="2.1" height="41.8" fill="#6b9dfe"/>
<rect x="429.45" y="699.6" width="2.1" height="29.2" fill="#6b9dfe"/>
<rect x="431.82" y="711.0" width="2.1" height="17.8" fill="#6b9dfe"/>
<rect x="434.20" y="692.1" width="2.1" height="36.7" fill="#6b9dfe"/>
<rect x="436.57" y="681.4" width="2.1" height="47.4" fill="#6b9dfe"/>
<rect x="438.94" y="690.5" width="2.1" height="38.3" fill="#6b9dfe"/>
<rect x="441.31" y="683.1" width="2.1" height="45.7" fill="#6b9dfe"/>
<rect x="443.68" y="687.1" width="2.1" height="41.7" fill="#6b9dfe"/>
<rect x="446.06" y="694.9" width="2.1" height="33.9" fill="#6b9dfe"/>
<rect x="448.43" y="690.2" width="2.1" height="38.6" fill="#6b9dfe"/>
<rect x="450.80" y="685.0" width="2.1" height="43.8" fill="#6b9dfe"/>
<rect x="453.17" y="700.1" width="2.1" height="28.7" fill="#6b9dfe"/>
<rect x="455.54" y="693.6" width="2.1" height="35.2" fill="#6b9dfe"/>
<rect x="457.92" y="686.0" width="2.1" height="42.8" fill="#6b9dfe"/>
<rect x="460.29" y="674.0" width="2.1" height="54.8" fill="#6b9dfe"/>
<rect x="462.66" y="664.0" width="2.1" height="64.8" fill="#6b9dfe"/>
<rect x="465.03" y="669.7" width="2.1" height="59.1" fill="#6b9dfe"/>
<rect x="467.40" y="681.8" width="2.1" height="47.0" fill="#6b9dfe"/>
<rect x="469.78" y="690.2" width="2.1" height="38.6" fill="#6b9dfe"/>
<rect x="472.15" y="685.8" width="2.1" height="43.0" fill="#6b9dfe"/>
<rect x="474.52" y="682.4" width="2.1" height="46.4" fill="#6b9dfe"/>
<rect x="476.89" y="693.3" width="2.1" height="35.5" fill="#6b9dfe"/>
<rect x="479.26" y="684.2" width="2.1" height="44.6" fill="#6b9dfe"/>
<rect x="481.64" y="703.6" width="2.1" height="25.2" fill="#6b9dfe"/>
<rect x="484.01" y="696.1" width="2.1" height="32.7" fill="#6b9dfe"/>
<rect x="486.38" y="679.5" width="2.1" height="49.3" fill="#6b9dfe"/>
<rect x="488.75" y="688.2" width="2.1" height="40.6" fill="#6b9dfe"/>
<rect x="491.12" y="673.4" width="2.1" height="55.4" fill="#6b9dfe"/>
<rect x="493.50" y="681.9" width="2.1" height="46.9" fill="#6b9dfe"/>
<rect x="495.87" y="669.3" width="2.1" height="59.5" fill="#6b9dfe"/>
<rect x="498.24" y="670.2" width="2.1" height="58.6" fill="#6b9dfe"/>
<rect x="500.61" y="671.1" width="2.1" height="57.7" fill="#6b9dfe"/>
<rect x="502.98" y="664.0" width="2.1" height="64.8" fill="#6b9dfe"/>
<rect x="505.36" y="672.1" width="2.1" height="56.7" fill="#6b9dfe"/>
<rect x="507.73" y="680.3" width="2.1" height="48.5" fill="#6b9dfe"/>
<rect x="510.10" y="680.5" width="2.1" height="48.3" fill="#6b9dfe"/>
<rect x="512.47" y="695.7" width="2.1" height="33.1" fill="#6b9dfe"/>
<rect x="514.84" y="690.2" width="2.1" height="38.6" fill="#6b9dfe"/>
<rect x="517.22" y="687.1" width="2.1" height="41.7" fill="#6b9dfe"/>
<rect x="519.59" y="700.3" width="2.1" height="28.5" fill="#6b9dfe"/>
<rect x="521.96" y="685.0" width="2.1" height="43.8" fill="#6b9dfe"/>
<rect x="524.33" y="699.7" width="2.1" height="29.1" fill="#6b9dfe"/>
<rect x="526.70" y="677.1" width="2.1" height="51.7" fill="#6b9dfe"/>
<rect x="529.08" y="684.2" width="2.1" height="44.6" fill="#6b9dfe"/>
<rect x="531.45" y="688.2" width="2.1" height="40.6" fill="#6b9dfe"/>
<rect x="533.82" y="666.6" width="2.1" height="62.2" fill="#6b9dfe"/>
<rect x="536.19" y="697.3" width="2.1" height="31.5" fill="#6b9dfe"/>
<rect x="538.56" y="696.3" width="2.1" height="32.5" fill="#6b9dfe"/>
<rect x="540.94" y="702.9" width="2.1" height="25.9" fill="#6b9dfe"/>
<rect x="543.31" y="681.0" width="2.1" height="47.8" fill="#6b9dfe"/>
<rect x="545.68" y="690.2" width="2.1" height="38.6" fill="#6b9dfe"/>
<rect x="548.05" y="707.3" width="2.1" height="21.5" fill="#6b9dfe"/>
<rect x="550.42" y="685.2" width="2.1" height="43.6" fill="#6b9dfe"/>
<rect x="552.80" y="698.2" width="2.1" height="30.6" fill="#6b9dfe"/>
<rect x="555.17" y="690.2" width="2.1" height="38.6" fill="#6b9dfe"/>
<rect x="557.54" y="691.3" width="2.1" height="37.5" fill="#6b9dfe"/>
<rect x="559.91" y="689.1" width="2.1" height="39.7" fill="#6b9dfe"/>
<rect x="562.28" y="695.2" width="2.1" height="33.6" fill="#6b9dfe"/>
<rect x="564.66" y="687.3" width="2.1" height="41.5" fill="#6b9dfe"/>
<rect x="567.03" y="698.9" width="2.1" height="29.9" fill="#6b9dfe"/>
<rect x="569.40" y="686.1" width="2.1" height="42.7" fill="#6b9dfe"/>
<rect x="571.77" y="685.6" width="2.1" height="43.2" fill="#6b9dfe"/>
<rect x="574.14" y="682.9" width="2.1" height="45.9" fill="#6b9dfe"/>
<rect x="576.52" y="669.2" width="2.1" height="59.6" fill="#6b9dfe"/>
<rect x="578.89" y="679.2" width="2.1" height="49.6" fill="#6b9dfe"/>
<rect x="581.26" y="671.9" width="2.1" height="56.9" fill="#6b9dfe"/>
<rect x="583.63" y="690.5" width="2.1" height="38.3" fill="#6b9dfe"/>
<rect x="586.00" y="696.1" width="2.1" height="32.7" fill="#6b9dfe"/>
<rect x="588.38" y="694.4" width="2.1" height="34.4" fill="#6b9dfe"/>
<rect x="590.75" y="674.5" width="2.1" height="54.3" fill="#6b9dfe"/>
<rect x="593.12" y="687.0" width="2.1" height="41.8" fill="#6b9dfe"/>
<rect x="595.49" y="695.2" width="2.1" height="33.6" fill="#6b9dfe"/>
<rect x="597.86" y="703.6" width="2.1" height="25.2" fill="#6b9dfe"/>
<rect x="600.24" y="688.9" width="2.1" height="39.9" fill="#6b9dfe"/>
<rect x="602.61" y="691.0" width="2.1" height="37.8" fill="#6b9dfe"/>
<rect x="604.98" y="686.0" width="2.1" height="42.8" fill="#6b9dfe"/>
<rect x="607.35" y="695.2" width="2.1" height="33.6" fill="#6b9dfe"/>
<rect x="609.72" y="665.1" width="2.1" height="63.7" fill="#6b9dfe"/>
<rect x="612.10" y="669.0" width="2.1" height="59.8" fill="#6b9dfe"/>
<rect x="614.47" y="684.2" width="2.1" height="44.6" fill="#6b9dfe"/>
<rect x="616.84" y="661.4" width="2.1" height="67.4" fill="#6b9dfe"/>
<rect x="619.21" y="677.1" width="2.1" height="51.7" fill="#6b9dfe"/>
<rect x="621.58" y="671.1" width="2.1" height="57.7" fill="#6b9dfe"/>
<rect x="623.96" y="678.9" width="2.1" height="49.9" fill="#6b9dfe"/>
<rect x="626.33" y="690.8" width="2.1" height="38.0" fill="#6b9dfe"/>
<rect x="628.70" y="689.2" width="2.1" height="39.6" fill="#6b9dfe"/>
<rect x="631.07" y="698.2" width="2.1" height="30.6" fill="#6b9dfe"/>
<rect x="633.44" y="689.6" width="2.1" height="39.2" fill="#6b9dfe"/>
<rect x="635.82" y="691.3" width="2.1" height="37.5" fill="#6b9dfe"/>
<rect x="638.19" y="695.0" width="2.1" height="33.8" fill="#eb4d2f"/>
<rect x="640.56" y="677.1" width="2.1" height="51.7" fill="#6b9dfe"/>
<rect x="642.93" y="698.9" width="2.1" height="29.9" fill="#6b9dfe"/>
<rect x="645.30" y="686.0" width="2.1" height="42.8" fill="#6b9dfe"/>
<rect x="647.68" y="687.0" width="2.1" height="41.8" fill="#6b9dfe"/>
<rect x="650.05" y="674.0" width="2.1" height="54.8" fill="#6b9dfe"/>
<rect x="652.42" y="701.5" width="2.1" height="27.3" fill="#eb4d2f"/>
<rect x="654.79" y="681.0" width="2.1" height="47.8" fill="#6b9dfe"/>
<rect x="657.16" y="685.2" width="2.1" height="43.6" fill="#6b9dfe"/>
<rect x="659.54" y="683.7" width="2.1" height="45.1" fill="#6b9dfe"/>
<rect x="661.91" y="688.2" width="2.1" height="40.6" fill="#6b9dfe"/>
<rect x="664.28" y="682.1" width="2.1" height="46.7" fill="#6b9dfe"/>
<rect x="666.65" y="703.1" width="2.1" height="25.7" fill="#6b9dfe"/>
<rect x="669.02" y="700.3" width="2.1" height="28.5" fill="#6b9dfe"/>
<rect x="671.40" y="688.1" width="2.1" height="40.7" fill="#6b9dfe"/>
<rect x="673.77" y="699.2" width="2.1" height="29.6" fill="#6b9dfe"/>
<rect x="676.14" y="708.1" width="2.1" height="20.7" fill="#6b9dfe"/>
<rect x="678.51" y="689.5" width="2.1" height="39.3" fill="#6b9dfe"/>
<rect x="680.88" y="691.2" width="2.1" height="37.6" fill="#6b9dfe"/>
<rect x="683.26" y="691.2" width="2.1" height="37.6" fill="#6b9dfe"/>
<rect x="685.63" y="708.6" width="2.1" height="20.2" fill="#6b9dfe"/>
<rect x="697.05" y="688.1" width="2.1" height="40.7" fill="#6b9dfe"/>
<rect x="699.39" y="693.8" width="2.1" height="35.0" fill="#6b9dfe"/>
<rect x="701.74" y="688.9" width="2.1" height="39.9" fill="#6b9dfe"/>
<rect x="704.08" y="690.7" width="2.1" height="38.1" fill="#6b9dfe"/>
<rect x="706.43" y="696.9" width="2.1" height="31.9" fill="#6b9dfe"/>
<rect x="708.77" y="677.9" width="2.1" height="50.9" fill="#6b9dfe"/>
<rect x="711.12" y="688.9" width="2.1" height="39.9" fill="#6b9dfe"/>
<rect x="713.46" y="700.0" width="2.1" height="28.8" fill="#6b9dfe"/>
<rect x="715.81" y="679.8" width="2.1" height="49.0" fill="#6b9dfe"/>
<rect x="718.15" y="686.1" width="2.1" height="42.7" fill="#6b9dfe"/>
<rect x="720.50" y="684.6" width="2.1" height="44.2" fill="#6b9dfe"/>
<rect x="722.84" y="670.4" width="2.1" height="58.4" fill="#6b9dfe"/>
<rect x="725.19" y="683.3" width="2.1" height="45.5" fill="#6b9dfe"/>
<rect x="727.53" y="667.9" width="2.1" height="60.9" fill="#eb4d2f"/>
<rect x="729.88" y="665.8" width="2.1" height="63.0" fill="#6b9dfe"/>
<rect x="732.22" y="679.5" width="2.1" height="49.3" fill="#6b9dfe"/>
<rect x="734.57" y="684.1" width="2.1" height="44.7" fill="#6b9dfe"/>
<rect x="736.91" y="669.2" width="2.1" height="59.6" fill="#6b9dfe"/>
<rect x="739.26" y="697.8" width="2.1" height="31.0" fill="#6b9dfe"/>
<rect x="741.61" y="695.8" width="2.1" height="33.0" fill="#eb4d2f"/>
<rect x="743.95" y="686.7" width="2.1" height="42.1" fill="#6b9dfe"/>
<rect x="746.29" y="699.4" width="2.1" height="29.4" fill="#6b9dfe"/>
<rect x="748.64" y="685.2" width="2.1" height="43.6" fill="#6b9dfe"/>
<rect x="750.98" y="694.3" width="2.1" height="34.5" fill="#6b9dfe"/>
<rect x="753.33" y="699.4" width="2.1" height="29.4" fill="#6b9dfe"/>
<rect x="755.67" y="691.0" width="2.1" height="37.8" fill="#6b9dfe"/>
<rect x="758.02" y="689.7" width="2.1" height="39.1" fill="#6b9dfe"/>
<rect x="760.37" y="688.0" width="2.1" height="40.8" fill="#6b9dfe"/>
<rect x="762.71" y="683.3" width="2.1" height="45.5" fill="#6b9dfe"/>
<rect x="765.05" y="696.3" width="2.1" height="32.5" fill="#6b9dfe"/>
<rect x="767.40" y="698.1" width="2.1" height="30.7" fill="#eb4d2f"/>
<rect x="769.75" y="694.1" width="2.1" height="34.7" fill="#6b9dfe"/>
<rect x="772.09" y="675.3" width="2.1" height="53.5" fill="#6b9dfe"/>
<rect x="90.2" y="659" width="597.4" height="69.8" fill="rgba(17,27,78,0.41)"/>
<rect x="687.6" y="659" width="9.7" height="69.8" fill="#4e5780"/>
<rect x="692.0" y="669.1" width="1.2" height="49.9" fill="#d4d7e2"/>
<rect x="689.8" y="660.8" width="1.2" height="1.2" fill="#2e3556"/>
<rect x="692.3" y="660.8" width="1.2" height="1.2" fill="#2e3556"/>
<rect x="694.8" y="661.8" width="1.2" height="1.2" fill="#2e3556"/>
<rect x="691.1" y="663.0" width="1.2" height="1.2" fill="#2e3556"/>
<rect x="693.6" y="663.0" width="1.2" height="1.2" fill="#2e3556"/>
<rect x="689.8" y="664.8" width="1.2" height="1.2" fill="#2e3556"/>
<rect x="691.1" y="666.8" width="1.2" height="1.2" fill="#2e3556"/>
<rect x="693.6" y="666.8" width="1.2" height="1.2" fill="#2e3556"/>
<rect x="691.6" y="720.7" width="1.2" height="1.2" fill="#2e3556"/>
<rect x="689.8" y="722.8" width="1.2" height="1.2" fill="#2e3556"/>
<rect x="692.4" y="723.0" width="1.2" height="1.2" fill="#2e3556"/>
<rect x="691.6" y="725.0" width="1.2" height="1.2" fill="#2e3556"/>
<rect x="693.8" y="725.8" width="1.2" height="1.2" fill="#2e3556"/>
<rect x="690.8" y="726.6" width="1.2" height="1.2" fill="#2e3556"/>
<rect x="784.1" y="659" width="8.9" height="69.8" fill="#6e7591"/>
<rect x="787.8" y="669" width="1.2" height="49.6" fill="#f2f3f8"/>
<text x="209.7" y="751.6" font-size="12.2" fill="#6b7290" font-weight="normal" textLength="47.0" lengthAdjust="spacingAndGlyphs">8:33 PM</text>
<text x="214.2" y="765.7" font-size="12.2" fill="#6b7290" font-weight="normal" textLength="38.0" lengthAdjust="spacingAndGlyphs">18 Aug</text>
<text x="367.5" y="751.6" font-size="12.2" fill="#6b7290" font-weight="normal" textLength="47.0" lengthAdjust="spacingAndGlyphs">2:06 AM</text>
<text x="372.0" y="765.7" font-size="12.2" fill="#6b7290" font-weight="normal" textLength="38.0" lengthAdjust="spacingAndGlyphs">19 Aug</text>
<text x="525.1" y="751.6" font-size="12.2" fill="#6b7290" font-weight="normal" textLength="47.0" lengthAdjust="spacingAndGlyphs">7:40 AM</text>
<text x="529.6" y="765.7" font-size="12.2" fill="#6b7290" font-weight="normal" textLength="38.0" lengthAdjust="spacingAndGlyphs">19 Aug</text>
<text x="685.0" y="751.6" font-size="12.2" fill="#6b7290" font-weight="normal" textLength="43.0" lengthAdjust="spacingAndGlyphs">1:13 PM</text>
<text x="687.5" y="765.7" font-size="12.2" fill="#6b7290" font-weight="normal" textLength="38.0" lengthAdjust="spacingAndGlyphs">19 Aug</text>
<rect x="860.1" y="269.5" width="229.9" height="21.5" fill="#f4f5f8"/>
<rect x="860.1" y="498" width="229.9" height="21.8" fill="#f4f5f8"/>
<rect x="860.1" y="559.1" width="229.9" height="21.9" fill="#f4f5f8"/>
<rect x="860.1" y="621.2" width="229.9" height="22" fill="#f4f5f8"/>
<rect x="860.1" y="682.1" width="229.9" height="21.8" fill="#f4f5f8"/>
<rect x="860.1" y="743.6" width="229.9" height="21.6" fill="#f4f5f8"/>
<text x="827.6" y="188.7" font-size="12.2" fill="#b3b7cb" font-weight="normal" textLength="116.8" lengthAdjust="spacingAndGlyphs">Trend for Last 60min</text>
<text x="827.6" y="224.8" font-size="12.2" fill="#6b7290" font-weight="bold" textLength="44.7" lengthAdjust="spacingAndGlyphs">Percent</text>
<text x="827.8" y="330.9" font-size="12.2" fill="#6b7290" font-weight="bold" textLength="25.3" lengthAdjust="spacingAndGlyphs">Rate</text>
<text x="860.6" y="262.8" font-size="12.2" fill="#262c5c" font-weight="normal" textLength="35.8" lengthAdjust="spacingAndGlyphs">Health</text>
<text x="1041.6" y="262.8" font-size="12.2" fill="#262c5c" font-weight="normal" textLength="48.0" lengthAdjust="spacingAndGlyphs">100 /100</text>
<text x="860.6" y="369.7" font-size="12.2" fill="#262c5c" font-weight="bold" textLength="76.8" lengthAdjust="spacingAndGlyphs">Request Rate</text>
<text x="1063.0" y="369.7" font-size="12.2" fill="#262c5c" font-weight="bold" textLength="26.6" lengthAdjust="spacingAndGlyphs">66/s</text>
<text x="860.6" y="430.8" font-size="12.2" fill="#262c5c" font-weight="bold" textLength="57.2" lengthAdjust="spacingAndGlyphs">Error Rate</text>
<text x="1051.9" y="430.8" font-size="12.2" fill="#262c5c" font-weight="bold" textLength="37.7" lengthAdjust="spacingAndGlyphs">0.59/s</text>
<text x="860.6" y="492.0" font-size="12.2" fill="#262c5c" font-weight="normal" textLength="79.5" lengthAdjust="spacingAndGlyphs">Error Rate 4xx</text>
<text x="1054.8" y="492.0" font-size="12.2" fill="#262c5c" font-weight="normal" textLength="34.8" lengthAdjust="spacingAndGlyphs">0.59/s</text>
<text x="860.6" y="552.8" font-size="12.2" fill="#262c5c" font-weight="normal" textLength="78.9" lengthAdjust="spacingAndGlyphs">Error Rate 5xx</text>
<text x="1072.0" y="552.8" font-size="12.2" fill="#262c5c" font-weight="normal" textLength="17.6" lengthAdjust="spacingAndGlyphs">0/s</text>
<text x="860.6" y="613.9" font-size="12.2" fill="#262c5c" font-weight="normal" textLength="91.9" lengthAdjust="spacingAndGlyphs">Error Rate Client</text>
<text x="1072.0" y="613.9" font-size="12.2" fill="#262c5c" font-weight="normal" textLength="17.6" lengthAdjust="spacingAndGlyphs">0/s</text>
<text x="860.6" y="675.5" font-size="12.2" fill="#262c5c" font-weight="normal" textLength="114.2" lengthAdjust="spacingAndGlyphs">Error Rate Upstream</text>
<text x="1072.0" y="675.5" font-size="12.2" fill="#262c5c" font-weight="normal" textLength="17.6" lengthAdjust="spacingAndGlyphs">0/s</text>
<text x="860.6" y="736.6" font-size="12.2" fill="#262c5c" font-weight="normal" textLength="55.4" lengthAdjust="spacingAndGlyphs">Drop Rate</text>
<text x="1049.5" y="736.6" font-size="12.2" fill="#262c5c" font-weight="normal" textLength="40.1" lengthAdjust="spacingAndGlyphs">4442/s</text>
<line x1="861.8" x2="1088.3" y1="270.9" y2="270.9" stroke="#959bb6" stroke-width="2"/>
<line x1="861.8" x2="1088.3" y1="578.9" y2="578.9" stroke="#959bb6" stroke-width="2"/>
<line x1="861.8" x2="1088.3" y1="744.8" y2="744.8" stroke="#959bb6" stroke-width="2"/>
<path d="M861.8 380.1 C890 381.4 910 382.8 930 382.8 C975 382.8 1020 382.3 1056 381.4 C1068 380.9 1080 379.3 1088.3 377.7" fill="none" stroke="#6b9dfe" stroke-width="1.8"/>
<path d="M861.8 450 C872 453 884 456.9 897 456.9 L1014 456.9 C1028 456.9 1040 449.5 1052 446.6 C1066 443.2 1078 441 1088.3 438.5" fill="none" stroke="#a3169f" stroke-width="1.8"/>
<path d="M861.8 511.2 C872 514.2 884 518.1 897 518.1 L1014 518.1 C1028 518.1 1040 510.7 1052 507.8 C1066 504.4 1078 502.2 1088.3 499.7" fill="none" stroke="#959bb6" stroke-width="1.8"/>
<rect x="832.1" y="354.6" width="3.7" height="10.8" rx="1" fill="#6b9dfe"/><rect x="838.3" y="358.3" width="3.7" height="7.1" rx="1" fill="#a8acbf"/>
<rect x="832.1" y="415.7" width="3.7" height="10.5" rx="1" fill="#a8acbf"/><rect x="838.3" y="419.2" width="3.7" height="7.1" rx="1" fill="#a3169f"/>
</svg>
<div class="status"></div>
<svg class="abs" style="left:0;top:780px" width="480" height="28" viewBox="0 780 480 28"><text x="-0.5" y="802.7" font-size="12.5" fill="#373e55" textLength="462" lengthAdjust="spacingAndGlyphs">workspaces/load-balancers/namespaces/webapp-api-protection/virtual_hosts/tcp</text></svg>
<svg class="abs" style="left:1137px;top:800px" width="8" height="8" viewBox="0 0 8 8"><path d="M8 3.2L4.2 8H8Z" fill="#2a3040"/></svg>
</body></html>
